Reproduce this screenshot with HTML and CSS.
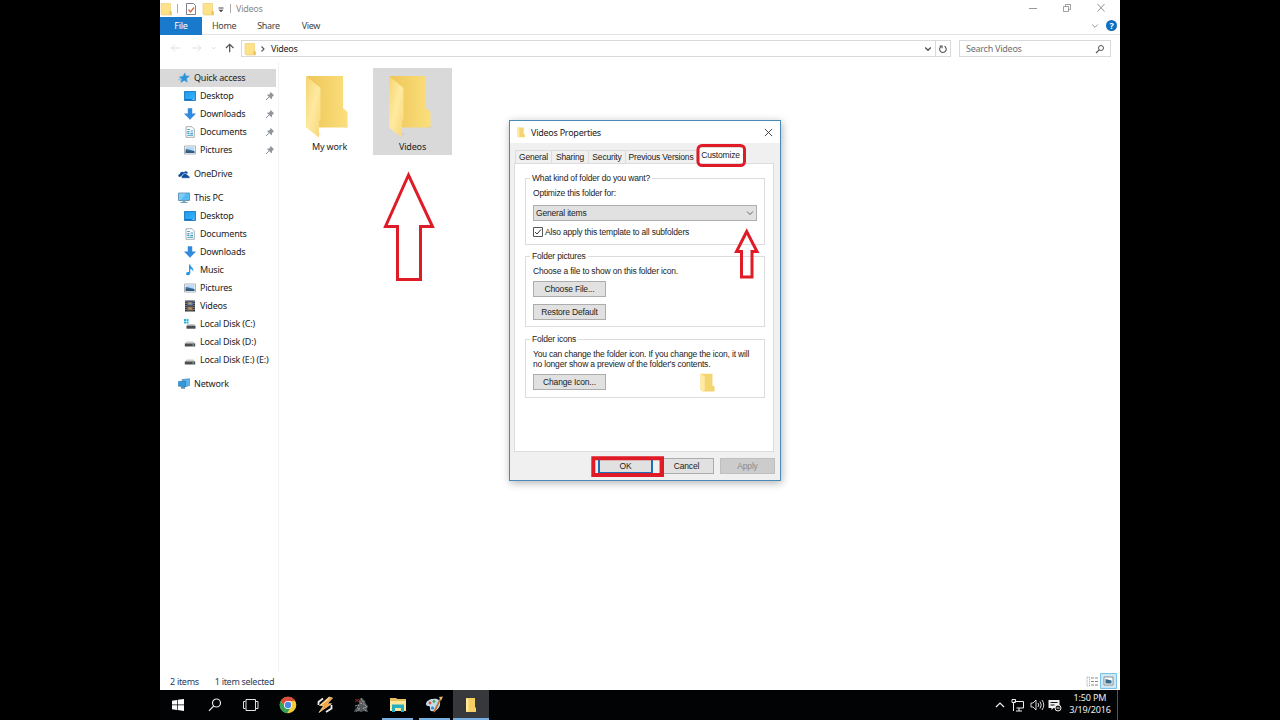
FILE: index.html
```html
<!DOCTYPE html>
<html lang="en">
  <head>
    <meta charset="UTF-8" />
    <meta name="viewport" content="width=device-width, initial-scale=1.0" />
    <title>Videos</title>
    <link rel="stylesheet" href="styles.css">
  </head>
  <body>
    <!-- shared icons -->
    <svg class="sprite" width="0" height="0">
      <defs>
        <linearGradient id="gold" x1="0" x2="1"><stop offset="0" stop-color="#eec658"/><stop offset="1" stop-color="#fbdf7c"/></linearGradient>
        <linearGradient id="flap" x1="0" x2="1" y2="1"><stop offset="0" stop-color="#f6d371"/><stop offset=".5" stop-color="#ffeaa0"/><stop offset="1" stop-color="#f6d578"/></linearGradient>
        <linearGradient id="screen" x1="0" x2="1" y2="1"><stop offset="0" stop-color="#149af0"/><stop offset="1" stop-color="#43b4fa"/></linearGradient>
      </defs>
      <symbol id="big-folder" viewBox="0 0 42 62">
        <path d="M38 50h6v1.500l-6 .5zM12 57l4 1-4 2z" fill="#000" opacity=".08"/>
        <path d="M1 0h36v32l4.500 4v15.500H12L1 50z" fill="url(#gold)"/>
        <path d="M0 0l14.500 12v31l-1.500 2.500V61.500L0 51.500z" fill="url(#flap)"/>
      </symbol>
      <symbol id="small-folder" viewBox="0 0 12 14">
        <path d="M1 .5h8.500v8l1.500 1V13H3.500L1 12z" fill="#f5d572"/>
        <path d="M1 .5l3 1.800v9.700l-.5 1.800L1 12z" fill="#ffeba8"/>
      </symbol>
      <symbol id="flat-folder" viewBox="0 0 12 14">
        <path d="M1 1.500h9.500v8l1 .5v3H2l-1-1z" fill="#fde28a" stroke="#ecc969" stroke-width=".6"/>
        <path d="M9.500 9h2v4h-2z" fill="#ecc45d"/>
      </symbol>
      <symbol id="star" viewBox="0 0 12 12">
        <path d="M6.700 1l1.100 3 3.500.1-2.900 2.300.8 3.700-3-1.900L3 10.500l1-3.500-2.500-2 3.500-.6z" fill="#2f93dc" stroke="#2f93dc" stroke-width=".6"/>
        <path d="M.5 7.500l2.500-.8-.5 1.800zM2 4l1.500.3" stroke="#74bdec" stroke-width=".7" fill="none"/>
      </symbol>
      <symbol id="desktop" viewBox="0 0 12 12">
        <path d="M.5 1.500h11v9H.5z" fill="url(#screen)" stroke="#0b6cb6" stroke-width=".8"/>
        <path d="M1 9h10v1H1z" fill="#0877c7"/><path d="M8.500 9.100h2v.8h-2z" fill="#bde5ff"/>
      </symbol>
      <symbol id="download" viewBox="0 0 12 12">
        <path d="M4 .5h4v5.200h3.500L6 11.500.5 5.700H4z" fill="#2f8be0" stroke="#2a7bcb" stroke-width=".4"/>
      </symbol>
      <symbol id="document" viewBox="0 0 12 12">
        <path d="M2 .7h6L10.300 3v8.300H2z" fill="#fff" stroke="#8a9aa4" stroke-width=".8"/>
        <path d="M3.300 3.500h2.500M6.500 5h2.500M3.300 7.500h2M3.300 9.300H9" stroke="#37a3ba"/>
        <path d="M3.300 5h2.200v1.500H3.300zM6.200 6.700H9v1.500H6.200z" fill="#5a9ac5"/>
      </symbol>
      <symbol id="picture" viewBox="0 0 12 12">
        <path d="M.5 2h11v8H.5z" fill="#fff" stroke="#9a9fa3" stroke-width=".8"/>
        <path d="M1.600 3.100h8.800v5.700H1.600z" fill="#b6dafa"/>
        <path d="M1.600 5l3 .5 5.800 1.500v1.800H1.600z" fill="#3f6e91"/><path d="M1.600 7.500h8.800v1.300H1.600z" fill="#235078"/>
      </symbol>
      <symbol id="cloud" viewBox="0 0 12 12">
        <path d="M1.500 9C-.3 8.500 0 6 2 6c0-2 2.500-3 4-1.700C7.500 2 10 3.500 9.800 5.300z" fill="#0d4fa0"/>
        <path d="M4.500 10.300C2.700 9.800 3 7.500 4.700 7.300 5 5 8.300 4.700 9 6.700c1.500-.2 1.700 1 1.600 1.300 1.800.3 1.600 2.300.2 2.300z" fill="#124f9f" stroke="#fff" stroke-width=".6"/>
      </symbol>
      <symbol id="pc" viewBox="0 0 12 12">
        <path d="M.5 1h11v7.500H.5z" fill="#55baf4" stroke="#5b87a6" stroke-width=".8"/>
        <path d="M1 1.400h7L3 8H1z" fill="#7dcdf9"/><path d="M4.500 8.500h3V10h-3zM2.500 10h7v1h-7z" fill="#76a3be"/>
      </symbol>
      <symbol id="music" viewBox="0 0 12 12">
        <path d="M5 .5h1.200C6.500 3 10.700 4 9 8c0-2-1.300-2.800-2.700-3v4.200C6 11.600 2 12 2 9.800c0-1.600 1.800-2.200 3-1.700z" fill="#279be4"/>
      </symbol>
      <symbol id="video" viewBox="0 0 12 12">
        <path d="M1 .5h10v11H1z" fill="#35363a"/>
        <path d="M3.200 1.500h5.600v4H3.200z" fill="#5d7ca8"/><path d="M3.200 6.500h5.600v4H3.200z" fill="#87755c"/>
        <path d="M4 4l2-2 2.500 2.500zM4 9l2-2 2.500 2.500z" fill="#c09b65"/>
        <path d="M2 1v10M10 1v10" stroke="#c8c8c8" stroke-width=".9" stroke-dasharray="1 1"/>
      </symbol>
      <symbol id="disk" viewBox="0 0 12 12">
        <path d="M2.500 5.500h7l1.700 2.200H.8z" fill="#c9c9c9"/><path d="M.8 7.500h10.400v3H.8z" fill="#4b4d50"/>
        <path d="M8.500 9h1.500" stroke="#7ae28a"/>
      </symbol>
      <symbol id="windisk" viewBox="0 0 12 12">
        <path d="M3.500 6h6.500l1.500 2H2.500z" fill="#c9c9c9"/><path d="M2.500 7.700h9v3h-9z" fill="#4b4d50"/>
        <path d="M0 1h2v2H0zM2.500 1h2v2h-2zM0 3.500h2v2H0zM2.500 3.500h2v2h-2z" fill="#21b3e5"/>
      </symbol>
      <symbol id="network" viewBox="0 0 12 12">
        <path d="M4 1.500l7.500-.8v6.800L6 9z" fill="#62b4e8" stroke="#3d7eae" stroke-width=".6"/>
        <path d="M.5 3.500l7-.5v5.700l-7-.5z" fill="#3299dc" stroke="#2874aa" stroke-width=".6"/>
        <path d="M3 9l4 .3v1.500L3 10.500z" fill="#507f9d"/>
      </symbol>
      <symbol id="pin" viewBox="0 0 10 10">
        <path d="M5.500.800L9.200 4.500l-1.200.3-1 1.700-.3 2L1.800 3.700l2.400-.2L5.400 2z" fill="#8f959b"/><path d="M4 6L1 9" stroke="#8f959b"/>
      </symbol>
    </svg>

    <div class="desktop">
      <div class="explorer">
        <div class="titlebar">
          <svg class="ticon"><use href="#flat-folder"/></svg>
          <span class="sep"></span>
          <svg class="ticon check" viewBox="0 0 12 14"><path d="M1.500 1.500h7l2 2v9h-9z" fill="#fff" stroke="#7d838a"/><path d="M3.500 7.500l2 2.500 3.500-4.500" fill="none" stroke="#d26b45" stroke-width="1.300"/></svg>
          <svg class="ticon"><use href="#flat-folder"/></svg>
          <svg class="drop" viewBox="0 0 6 6"><path d="M.5 1h5" stroke="#444"/><path d="M.5 2.800h5L3 5.300z" fill="#444"/></svg>
          <span class="sep"></span>
          <span class="title">Videos</span>
          <svg class="win-buttons" viewBox="0 0 80 16"><path d="M1 7.500h8" stroke="#999"/><path d="M35.500 5.500h5v5h-5zM37.500 5.300V3.500h5v5h-2" fill="none" stroke="#888" stroke-width=".8"/><path d="M69.500 3l7 7.500M76.500 3l-7 7.500" stroke="#888" stroke-width=".9"/></svg>
        </div>
        <div class="ribbon">
          <span class="file">File</span>
          <span class="rtab home">Home</span>
          <span class="rtab share">Share</span>
          <span class="rtab view">View</span>
          <svg class="chev" viewBox="0 0 8 8"><path d="M1.200 2.500L4 5.300l2.800-2.800" fill="none" stroke="#999"/></svg>
          <span class="help">?</span>
        </div>
        <div class="addressbar">
          <svg class="nav" viewBox="0 0 78 18" fill="none">
            <path d="M10 8.500h9M13.500 5L10 8.500l3.500 3.500M32 8.500h9M37.500 5L41 8.500l-3.500 3.500M52.500 7.500l2 2 2-2" stroke="#ddd"/>
            <path d="M71.500 13V5M67.500 8.500l4-4 4 4" stroke="#555" stroke-width="1.300"/>
          </svg>
          <div class="path">
            <svg class="ticon"><use href="#flat-folder"/></svg>
            <svg class="crumb" viewBox="0 0 6 8"><path d="M1.500 1.500L4 4 1.500 6.500" fill="none" stroke="#555" stroke-width="1.100"/></svg>
            <span>Videos</span>
            <svg class="chev" viewBox="0 0 8 8"><path d="M1.200 2.500L4 5.300l2.800-2.800" fill="none" stroke="#555" stroke-width="1.400"/></svg>
            <span class="refresh"><svg viewBox="0 0 10 10"><path d="M6.500 2.300A3.300 3.300 0 1 1 3 2.500M1.700 2h2.400v2.300" fill="none" stroke="#555" stroke-width="1.100"/></svg></span>
          </div>
          <div class="search">
            <span>Search Videos</span>
            <svg viewBox="0 0 10 10"><circle cx="6" cy="4" r="2.500" fill="none" stroke="#555"/><path d="M4.200 5.800L1 9" stroke="#555" stroke-width="1.200"/></svg>
          </div>
        </div>
        <div class="content">
          <div class="sidebar">
            <div class="group">
              <div class="row top quick"><svg><use href="#star"/></svg><span>Quick access</span></div>
              <div class="row"><svg><use href="#desktop"/></svg><span>Desktop</span><svg class="pin"><use href="#pin"/></svg></div>
              <div class="row"><svg><use href="#download"/></svg><span>Downloads</span><svg class="pin"><use href="#pin"/></svg></div>
              <div class="row"><svg><use href="#document"/></svg><span>Documents</span><svg class="pin"><use href="#pin"/></svg></div>
              <div class="row"><svg><use href="#picture"/></svg><span>Pictures</span><svg class="pin"><use href="#pin"/></svg></div>
            </div>
            <div class="group">
              <div class="row top"><svg><use href="#cloud"/></svg><span>OneDrive</span></div>
            </div>
            <div class="group">
              <div class="row top"><svg><use href="#pc"/></svg><span>This PC</span></div>
              <div class="row"><svg><use href="#desktop"/></svg><span>Desktop</span></div>
              <div class="row"><svg><use href="#document"/></svg><span>Documents</span></div>
              <div class="row"><svg><use href="#download"/></svg><span>Downloads</span></div>
              <div class="row"><svg><use href="#music"/></svg><span>Music</span></div>
              <div class="row"><svg><use href="#picture"/></svg><span>Pictures</span></div>
              <div class="row"><svg><use href="#video"/></svg><span>Videos</span></div>
              <div class="row"><svg><use href="#windisk"/></svg><span>Local Disk (C:)</span></div>
              <div class="row"><svg><use href="#disk"/></svg><span>Local Disk (D:)</span></div>
              <div class="row"><svg><use href="#disk"/></svg><span>Local Disk (E:) (E:)</span></div>
            </div>
            <div class="group">
              <div class="row top"><svg><use href="#network"/></svg><span>Network</span></div>
            </div>
          </div>
          <div class="files">
            <div class="tile"><svg><use href="#big-folder"/></svg><span>My work</span></div>
            <div class="tile selected"><svg><use href="#big-folder"/></svg><span>Videos</span></div>
          </div>
        </div>
        <div class="statusbar">
          <span class="count">2 items</span>
          <span>1 item selected</span>
          <svg class="views" viewBox="0 0 32 16">
            <path d="M2 4h2.500v9H2z" fill="none" stroke="#999" stroke-width=".7" stroke-dasharray="1.500 .6"/>
            <path d="M6 5h3M10 5h3M6 8.500h3M10 8.500h3M6 12h3M10 12h3" stroke="#888"/>
            <path d="M15.500.5h16v15h-16z" fill="#cce8f6" stroke="#7ac3e6"/>
            <path d="M19 4h9v8h-9z" fill="#fff" stroke="#777" stroke-width=".8"/><path d="M20.500 6l6 1.500v3h-6z" fill="#336d92"/>
          </svg>
        </div>
      </div>

      <div class="taskbar">
        <div class="task"><svg viewBox="0 0 20 20"><path d="M4 5.700l5-.8v4.700H4zM9.700 4.800L16 4v5.600H9.700zM4 10.300h5V15l-5-.7zM9.700 10.300H16V16l-6.300-.9z" fill="#fff"/></svg></div>
        <div class="task"><svg viewBox="0 0 20 20" fill="none" stroke="#e8e8e8" stroke-width="1.200"><circle cx="11.500" cy="8" r="4"/><path d="M8.700 11L4 15.800"/></svg></div>
        <div class="task"><svg viewBox="0 0 20 20" fill="none" stroke="#e0e0e0"><path d="M5 4.500h9.500v11H5zM4.500 6.500h-2v7h2M15 6.500h2v7h-2"/></svg></div>
        <div class="task"><svg viewBox="0 0 20 20"><circle cx="10" cy="10" r="8.300" fill="#f5cb35"/><path d="M2.800 5.800A8.300 8.300 0 0 1 17.300 6H10l-3.500 6z" fill="#dd4b3e"/><path d="M2.800 5.800A8.300 8.300 0 0 0 9 18.200l4-6.200-6.500 0z" fill="#35a057"/><circle cx="10" cy="10" r="4" fill="#fff"/><circle cx="10" cy="10" r="3.200" fill="#4b87e8"/></svg></div>
        <div class="task"><svg viewBox="0 0 20 20"><path d="M8 3.500L3.500 7v3M16.500 10v3.500L11 17" fill="none" stroke="#eee" stroke-width="1.800"/><path d="M14 2L4.500 10.500h4.200L4 17.500l12.500-8.700h-4.300L17.500 3z" fill="#f2a23a" stroke="#ffe3b0" stroke-width=".7"/><path d="M6 10l8-6.500" stroke="#fff0c5"/></svg></div>
        <div class="task"><svg viewBox="0 0 20 20"><path d="M8 5l3-2 3 3 1 3 2 2-1 3 1 3-4-1-3 1-3-1-4 1 1-3 3-2-1-2 2-1z" fill="#55585a"/><path d="M10 3l1 3 3 1M9 8l4 1 3 3-4 1 4 4M4 11l4-1-2 3 3 1-4 3" fill="none" stroke="#aaa" stroke-width=".9" stroke-dasharray="2 1"/><path d="M4 4l4 3M4 7l4-3" stroke="#932f34"/></svg></div>
        <div class="task open"><svg viewBox="0 0 20 20"><path d="M2 3h6l1.500 1H18v12H2z" fill="#e8bf5d"/><path d="M2 6h16v10H2z" fill="#ffe69a"/><path d="M4 9.500h12V17h-3v-4H7v4H4z" fill="#25aebf"/></svg></div>
        <div class="task open"><svg viewBox="0 0 20 20"><path d="M9 4c5-1 8 2 7 6s-5 7-9 6c-2-1 0-4-2-5-2 0-3-.5-3-2 0-3 4-5 7-5z" fill="#c1dcea"/><circle cx="6" cy="8" r="1.400" fill="#e44e44"/><circle cx="10" cy="6.500" r="1.400" fill="#51a253"/><circle cx="8.500" cy="13" r="1.500" fill="#3885cb"/><path d="M17 3l-6 12-1 2" stroke="#bd7036" stroke-width="1.700"/><path d="M15 2l4-.5-2 4z" fill="#e6bd79"/></svg></div>
        <div class="task open active"><svg viewBox="0 0 20 20"><path d="M5 3h9v9l1 1v4H5z" fill="#f6cf63"/><path d="M5 3l2.500 1.500V17L5 16z" fill="#ffe89d"/></svg></div>
        <div class="tray">
          <svg viewBox="0 0 72 16" fill="none" stroke="#eee">
            <path d="M5 10l4-4 4 4" stroke-width="1.200"/>
            <path d="M23.500 4.500h9v6.500h-7M28 11v3M25 14h6M21 2.500h3.500v3H21zM22.500 5.500V14" />
            <path d="M40 6h2l3-3v10l-3-3h-2zM47 6q1.500 2 0 4M49 4.500q2.500 3.500 0 7M51 3q3.500 5 0 10" stroke-width=".9"/>
            <path d="M57.500 3h11v8h-6l-2 2v-2h-3z" fill="#eee" stroke="none"/><path d="M59.500 5.500h7M59.500 8h4" stroke="#111"/><circle cx="67" cy="11" r="3" fill="#111" stroke="#eee"/><path d="M65.500 11h3"/>
          </svg>
          <div class="clock"><span>1:50 PM</span><span>3/19/2016</span></div>
          <span class="peek"></span>
        </div>
      </div>

      <div class="dialog">
        <div class="caption">
          <svg class="cap-icon"><use href="#small-folder"/></svg>
          <span>Videos Properties</span>
          <svg class="close" viewBox="0 0 10 10"><path d="M1 1l8 8M9 1L1 9" stroke="#333"/></svg>
        </div>
        <div class="tabs">
          <span class="tab">General</span>
          <span class="tab">Sharing</span>
          <span class="tab">Security</span>
          <span class="tab prev">Previous Versions</span>
          <span class="tab current">Customize</span>
        </div>
        <div class="panel">
          <fieldset class="kind">
            <legend>What kind of folder do you want?</legend>
            <p>Optimize this folder for:</p>
            <div class="select"><span>General items</span><svg viewBox="0 0 8 8"><path d="M1 2.500l3 3 3-3" fill="none" stroke="#555" stroke-width=".9"/></svg></div>
            <div class="checkline"><svg viewBox="0 0 10 10"><path d="M.5.500h9v9h-9z" fill="#fff" stroke="#444" stroke-width=".9"/><path d="M2 5l2 2 4-4.500" fill="none" stroke="#333"/></svg><span>Also apply this template to all subfolders</span></div>
          </fieldset>
          <fieldset class="pictures">
            <legend>Folder pictures</legend>
            <p>Choose a file to show on this folder icon.</p>
            <button>Choose File...</button>
            <button>Restore Default</button>
          </fieldset>
          <fieldset class="icons">
            <legend>Folder icons</legend>
            <p>You can change the folder icon. If you change the icon, it will<br>no longer show a preview of the folder's contents.</p>
            <div class="change"><button>Change Icon...</button><svg><use href="#small-folder"/></svg></div>
          </fieldset>
        </div>
        <div class="actions">
          <button class="ok">OK</button>
          <button class="cancel">Cancel</button>
          <button class="apply">Apply</button>
        </div>
      </div>

      <!-- red markers -->
      <svg class="marks" viewBox="160 0 960 720" fill="none" stroke="#e01b28" stroke-width="3">
        <path d="M408.500 175L385.500 226.500h12v53h23v-53h12z"/>
        <path d="M746.700 231.500L736.500 251.500h5v25.500h10.500v-25.500h5z"/>
        <rect x="698" y="145.500" width="46.500" height="20" rx="4"/>
        <path d="M593.300 458.200h68.700v16.800h-68.700z" stroke-width="4"/>
      </svg>
    </div>
  </body>
</html>
```
FILE: styles.css
```css
* {
  box-sizing: border-box;
}
body {
  margin: 0;
  background: #000;
  font-family: "Noto Sans", sans-serif;
  font-size: 9px;
  letter-spacing: -0.25px;
  color: #222;
  overflow: hidden;
}
svg {
  flex: none;
}
span,
p {
  white-space: nowrap;
}
.sprite {
  position: absolute;
}
.desktop {
  position: relative;
  width: 960px;
  height: 720px;
  margin: 0 auto;
  display: flex;
  flex-direction: column;
}
.explorer {
  height: 690px;
  background: #fff;
  display: flex;
  flex-direction: column;
}

/* title bar and ribbon */
.titlebar {
  height: 17px;
  display: flex;
  align-items: center;
}
.ticon {
  width: 12px;
  height: 14px;
}
.titlebar .ticon {
  margin-right: 5px;
}
.titlebar .check {
  margin-left: 7px;
}
.sep {
  width: 1px;
  height: 9px;
  background: #aaa;
}
.drop {
  width: 6px;
  height: 6px;
  margin: 2px 6px 0 -1px;
}
.title {
  margin-left: 5px;
  color: #8a8a8a;
}
.win-buttons {
  width: 80px;
  height: 16px;
  margin: 0 12px 0 auto;
}
.ribbon {
  height: 18px;
  display: flex;
  align-items: center;
  border-bottom: 1px solid #e3e3e3;
  color: #444;
}
.file {
  width: 42px;
  height: 18px;
  line-height: 18px;
  background: #1979ca;
  color: #fff;
  text-align: center;
}
.rtab {
  letter-spacing: -0.35px;
}
.home {
  margin-left: 10px;
}
.share {
  margin-left: 21px;
}
.view {
  margin-left: 22px;
}
.chev {
  width: 8px;
  height: 8px;
}
.ribbon .chev {
  margin-left: auto;
}
.help {
  width: 11px;
  height: 11px;
  margin: 0 3px 0 7px;
  border-radius: 50%;
  background: #0f6fc0;
  color: #fff;
  font-weight: bold;
  line-height: 11px;
  text-align: center;
}

/* address row */
.addressbar {
  height: 27px;
  padding-top: 5px;
  display: flex;
}
.nav {
  width: 78px;
  height: 17px;
  margin-right: 3px;
}
.path,
.search {
  height: 17px;
  border: 1px solid #d9d9d9;
  display: flex;
  align-items: center;
}
.path {
  width: 710px;
  padding-left: 2px;
}
.crumb {
  width: 6px;
  height: 8px;
  margin: 0 5px 0 4px;
}
.path .chev {
  margin: 0 3px 0 auto;
}
.refresh {
  width: 15px;
  height: 15px;
  border-left: 1px solid #d9d9d9;
  display: flex;
  align-items: center;
  justify-content: center;
}
.refresh svg,
.search svg {
  width: 10px;
  height: 10px;
}
.search {
  width: 152px;
  margin-left: 8px;
  padding: 0 5px 0 6px;
  justify-content: space-between;
  color: #707070;
}

/* folder tree */
.content {
  flex: 1;
  display: flex;
}
.sidebar {
  width: 119px;
  padding: 7px 2px 0 0;
  border-right: 1px solid #f3f3f3;
}
.group {
  margin-bottom: 6px;
}
.row {
  height: 18px;
  padding-left: 24px;
  display: flex;
  align-items: center;
  gap: 4px;
}
.row span {
  padding-bottom: 2px;
  letter-spacing: -0.2px;
}
.row svg {
  width: 12px;
  height: 12px;
}
.row.top {
  padding-left: 18px;
}
.row.quick {
  background: #d9d9d9;
}
.row .pin {
  width: 10px;
  height: 10px;
  margin: 0 1px 0 auto;
}

/* files */
.files {
  padding: 6px 0 0 11px;
  display: flex;
  gap: 4px;
}
.tile {
  width: 79px;
  height: 87px;
  padding-top: 8px;
  display: flex;
  flex-direction: column;
  align-items: center;
  letter-spacing: -0.15px;
}
.tile.selected {
  background: #d9d9d9;
}
.tile svg {
  width: 42px;
  height: 62px;
  margin-right: 5px;
}
.tile span {
  line-height: 12px;
  margin-top: 3px;
}
.statusbar {
  height: 18px;
  padding: 0 3px 0 10px;
  display: flex;
  align-items: center;
  letter-spacing: -0.3px;
  color: #2a3a5c;
}
.statusbar span {
  padding-top: 1px;
}
.count {
  margin-right: 16px;
}
.views {
  width: 32px;
  height: 16px;
  margin-left: auto;
}

/* taskbar */
.taskbar {
  height: 30px;
  background: #020305;
  display: flex;
}
.task {
  width: 36.600px;
  padding-top: 5px;
  text-align: center;
}
.task svg {
  width: 20px;
  height: 20px;
}
.task.open {
  background: linear-gradient(#76b0e2, #76b0e2) center bottom / 31px 2px no-repeat;
}
.task.active {
  background-color: #36383b;
  background-size: 100% 2px;
}
.tray {
  margin-left: auto;
  display: flex;
  align-items: center;
}
.tray svg {
  width: 72px;
  height: 16px;
}
.clock {
  width: 42px;
  margin: 0 6px 0 6px;
  padding-bottom: 2px;
  display: flex;
  flex-direction: column;
  align-items: center;
  line-height: 12px;
  letter-spacing: -0.15px;
  color: #eee;
}
.peek {
  width: 3px;
  height: 30px;
  border-left: 1px solid #555;
}

/* properties dialog */
.dialog {
  position: absolute;
  left: 349px;
  top: 120px;
  width: 272px;
  height: 361px;
  border: 1px solid #4a8bb5;
  background: #f0f0f0;
  box-shadow: 1px 2px 8px rgba(0, 0, 0, 0.3);
  display: flex;
  flex-direction: column;
  font-family: "Liberation Sans", Arial, sans-serif;
  font-size: 8.500px;
  letter-spacing: -0.18px;
}
.caption {
  height: 22px;
  padding: 0 7px 0 6px;
  background: #fff;
  display: flex;
  align-items: center;
  font-family: "Noto Sans", sans-serif;
  font-size: 9px;
  letter-spacing: -0.25px;
}
.cap-icon {
  width: 10px;
  height: 11px;
  margin-right: 5px;
}
.close {
  width: 9px;
  height: 9px;
  margin-left: auto;
}
.tabs {
  height: 20px;
  padding: 0 0 0 5px;
  display: flex;
  align-items: flex-end;
}
.tab {
  width: 37px;
  height: 13px;
  border: 1px solid #dcdcdc;
  border-width: 1px 1px 0 0;
  line-height: 13px;
  text-align: center;
}
.tab:first-child {
  border-left-width: 1px;
}
.tab.prev {
  width: 71px;
}
.tab.current {
  width: 48px;
  height: 16px;
  background: #fff;
  line-height: 15px;
}
.panel {
  width: 260px;
  height: 289px;
  margin-left: 4px;
  padding: 9px 8px 0 10px;
  border: 1px solid #dcdcdc;
  background: #fff;
}
fieldset {
  min-width: 0;
  width: 240px;
  margin: 0;
  padding: 0 7px;
  border: 1px solid #dcdcdc;
}
legend {
  height: 10px;
  margin-left: -3px;
  padding: 0 2px;
  line-height: 10px;
}
fieldset p {
  margin: 0;
  line-height: 10px;
}
.kind {
  height: 72px;
  margin-bottom: 6px;
}
.pictures {
  height: 76px;
  margin-bottom: 7px;
}
.icons {
  height: 64px;
}
.kind p,
.pictures p {
  margin-top: 5px;
}
.select {
  width: 224px;
  height: 16px;
  margin-top: 7px;
  padding: 0 2px;
  border: 1px solid #adadad;
  background: #e1e1e1;
  display: flex;
  align-items: center;
  justify-content: space-between;
}
.select svg {
  width: 8px;
  height: 8px;
}
.checkline {
  margin-top: 6px;
  display: flex;
  align-items: center;
  gap: 2px;
}
.checkline svg {
  width: 10px;
  height: 10px;
}
button {
  display: block;
  width: 73px;
  height: 16px;
  padding: 0;
  border: 1px solid #adadad;
  background: #e1e1e1;
  color: #222;
  font: inherit;
  letter-spacing: inherit;
  line-height: 14px;
}
.pictures button {
  margin: 5px 0 7px;
}
.icons p {
  margin-top: 5px;
}
.change {
  margin-top: 5px;
  display: flex;
}
.change svg {
  width: 17px;
  height: 20px;
  margin: -1px 0 0 93px;
}
.actions {
  padding: 6px 5px 0 0;
  display: flex;
  justify-content: flex-end;
  gap: 6px;
}
.actions button {
  width: 55px;
  line-height: 14px;
}
.actions .ok {
  border: 2px solid #1a6fb5;
  line-height: 12px;
}
.actions .apply {
  border-color: #bfbfbf;
  background: #ccc;
  color: #8b8b8b;
}

/* arrows and boxes over the windows */
.marks {
  position: absolute;
  left: 0;
  top: 0;
  width: 960px;
  height: 720px;
  pointer-events: none;
}
```
